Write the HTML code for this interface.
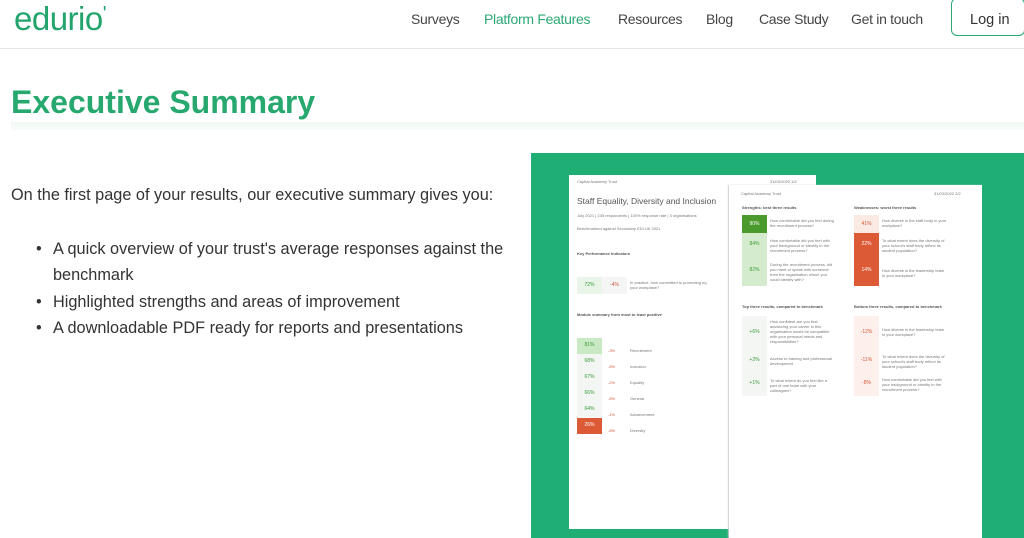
<!DOCTYPE html>
<html><head><meta charset="utf-8"><style>
*{margin:0;padding:0;box-sizing:border-box}
body{width:1024px;height:538px;overflow:hidden;background:#fff;font-family:"Liberation Sans",sans-serif;position:relative;color:#333}
.a{position:absolute}
.nav{font-size:14px;color:#444;top:11px;letter-spacing:-0.3px}
.t{position:absolute;font-size:4px;color:#777;white-space:nowrap;line-height:5px}
.box{position:absolute;font-size:5px;text-align:center;line-height:1}
</style></head><body>
<div class="a" style="left:14px;top:1px;font-size:33px;color:#23a46c;letter-spacing:-0.5px;line-height:36px">edurio<span style="font-size:20px;vertical-align:top;position:relative;top:-5px">'</span></div>
<div class="a nav" style="left:411px">Surveys</div>
<div class="a nav" style="left:484px;color:#2da873">Platform Features</div>
<div class="a nav" style="left:618px">Resources</div>
<div class="a nav" style="left:706px">Blog</div>
<div class="a nav" style="left:759px">Case Study</div>
<div class="a nav" style="left:851px">Get in touch</div>
<div class="a" style="left:951px;top:-2px;width:74px;height:38px;border:1px solid #2da873;border-radius:6px;font-size:14.5px;color:#333;padding:13px 0 0 18px">Log in</div>
<div class="a" style="left:0;top:48px;width:1024px;height:1px;background:#e5e5e5"></div>
<div class="a" style="left:11px;top:84px;font-size:32px;font-weight:bold;color:#27a86f">Executive Summary</div>
<div class="a" style="left:11px;top:122px;width:1013px;height:8px;background:linear-gradient(#eef7f1,#fafdfb)"></div>
<div class="a" style="left:11px;top:186px;font-size:16.3px;color:#333">On the first page of your results, our executive summary gives you:</div>
<div class="a" style="left:36px;top:236px;font-size:16.3px;line-height:26.4px;color:#333;width:490px">
<div style="display:flex"><span style="width:17px">•</span><span>A quick overview of your trust's average responses against the<br>benchmark</span></div>
<div style="display:flex"><span style="width:17px">•</span><span>Highlighted strengths and areas of improvement</span></div>
<div style="display:flex"><span style="width:17px">•</span><span>A downloadable PDF ready for reports and presentations</span></div>
</div>
<div class="a" style="left:531px;top:153px;width:493px;height:385px;background:#1fae74"></div>
<!-- page 1 -->
<div class="a" style="left:569px;top:175px;width:247px;height:354px;background:#fff"></div>
<div class="t" style="left:577px;top:179px">Capital Academy Trust</div>
<div class="t" style="left:770px;top:179px">31/03/2022 1/2</div>
<div class="t" style="left:577px;top:196px;font-size:8.5px;color:#555;line-height:10px">Staff Equality, Diversity and Inclusion</div>
<div class="t" style="left:577px;top:213px">July 2021 | 235 respondents | 100% response rate | 3 organisations</div>
<div class="t" style="left:577px;top:226px">Benchmarked against Secondary EDI UK 2021</div>
<div class="t" style="left:577px;top:251px;font-weight:bold;color:#555">Key Performance Indicators</div>
<div class="box" style="left:577px;top:277px;width:25px;height:17px;background:#eaf5ea;color:#3a9a3a;padding-top:6px">72%</div>
<div class="box" style="left:602px;top:277px;width:25px;height:17px;background:#f5f5f5;color:#d2573a;padding-top:6px">-4%</div>
<div class="t" style="left:630px;top:280px">In practice, how committed to promoting eq<br>your workplace?</div>
<div class="t" style="left:577px;top:312px;font-weight:bold;color:#555">Module summary from most to least positive</div>
<div class="box" style="left:577px;top:338px;width:25px;height:16px;background:#c9e9c4;color:#3a9a3a;padding-top:5px">81%</div>
<div class="box" style="left:577px;top:354px;width:25px;height:16px;background:#f3f6f3;color:#3a9a3a;padding-top:5px">68%</div>
<div class="box" style="left:577px;top:370px;width:25px;height:16px;background:#f3f6f3;color:#3a9a3a;padding-top:5px">67%</div>
<div class="box" style="left:577px;top:386px;width:25px;height:16px;background:#f3f6f3;color:#3a9a3a;padding-top:5px">66%</div>
<div class="box" style="left:577px;top:402px;width:25px;height:16px;background:#f3f6f3;color:#3a9a3a;padding-top:5px">64%</div>
<div class="box" style="left:577px;top:418px;width:25px;height:16px;background:#dd5a36;color:#fff;padding-top:5px">26%</div>
<div class="t" style="left:608px;top:343px;color:#d2573a;line-height:16px">-3%<br>-5%<br>-2%<br>-5%<br>-1%<br>-8%</div>
<div class="t" style="left:630px;top:343px;line-height:16px">Recruitment<br>Inclusion<br>Equality<br>General<br>Advancement<br>Diversity</div>
<!-- page 2 -->
<div class="a" style="left:729px;top:185px;width:253px;height:353px;background:#fff;box-shadow:-1px 0 1px #ccc"></div>
<div class="t" style="left:741px;top:191px">Capital Academy Trust</div>
<div class="t" style="left:934px;top:191px">31/03/2022 2/2</div>
<div class="t" style="left:742px;top:205px;font-weight:bold;color:#555">Strengths: best three results</div>
<div class="t" style="left:854px;top:205px;font-weight:bold;color:#555">Weaknesses: worst three results</div>
<div class="box" style="left:742px;top:215px;width:25px;height:18px;background:#4a9a2e;color:#fff;padding-top:7px">90%</div>
<div class="box" style="left:742px;top:233px;width:25px;height:23px;background:#d4eccd;color:#3a9a3a;padding-top:9px">84%</div>
<div class="box" style="left:742px;top:256px;width:25px;height:30px;background:#d4eccd;color:#3a9a3a;padding-top:12px">82%</div>
<div class="box" style="left:854px;top:215px;width:25px;height:18px;background:#fbe9e3;color:#d2573a;padding-top:7px">41%</div>
<div class="box" style="left:854px;top:233px;width:25px;height:23px;background:#dd5a36;color:#fff;padding-top:9px">22%</div>
<div class="box" style="left:854px;top:256px;width:25px;height:30px;background:#dd5a36;color:#fff;padding-top:12px">14%</div>
<div class="t" style="left:770px;top:218px">How comfortable did you feel during<br>the recruitment process?</div>
<div class="t" style="left:770px;top:238px">How comfortable did you feel with<br>your background or identity in the<br>recruitment process?</div>
<div class="t" style="left:770px;top:262px">During the recruitment process, did<br>you meet or speak with someone<br>from the organisation whom you<br>could identify with?</div>
<div class="t" style="left:882px;top:218px">How diverse is the staff body in your<br>workplace?</div>
<div class="t" style="left:882px;top:238px">To what extent does the diversity of<br>your school's staff body reflect its<br>student population?</div>
<div class="t" style="left:882px;top:268px">How diverse is the leadership team<br>in your workplace?</div>
<div class="t" style="left:742px;top:304px;font-weight:bold;color:#555">Top three results, compared to benchmark</div>
<div class="t" style="left:854px;top:304px;font-weight:bold;color:#555">Bottom three results, compared to benchmark</div>
<div class="box" style="left:742px;top:316px;width:25px;height:34px;background:#f3f6f3;color:#3a9a3a;padding-top:14px">+6%</div>
<div class="box" style="left:742px;top:350px;width:25px;height:22px;background:#f3f6f3;color:#3a9a3a;padding-top:8px">+2%</div>
<div class="box" style="left:742px;top:372px;width:25px;height:24px;background:#f3f6f3;color:#3a9a3a;padding-top:9px">+1%</div>
<div class="box" style="left:854px;top:316px;width:25px;height:34px;background:#fdf0ec;color:#d2573a;padding-top:14px">-12%</div>
<div class="box" style="left:854px;top:350px;width:25px;height:22px;background:#fdf0ec;color:#d2573a;padding-top:8px">-11%</div>
<div class="box" style="left:854px;top:372px;width:25px;height:24px;background:#fdf0ec;color:#d2573a;padding-top:9px">-8%</div>
<div class="t" style="left:770px;top:319px">How confident are you that<br>advancing your career in this<br>organisation would be compatible<br>with your personal needs and<br>responsibilities?</div>
<div class="t" style="left:770px;top:356px">Access to training and professional<br>development</div>
<div class="t" style="left:770px;top:378px">To what extent do you feel like a<br>part of one team with your<br>colleagues?</div>
<div class="t" style="left:882px;top:327px">How diverse is the leadership team<br>in your workplace?</div>
<div class="t" style="left:882px;top:354px">To what extent does the diversity of<br>your school's staff body reflect its<br>student population?</div>
<div class="t" style="left:882px;top:377px">How comfortable did you feel with<br>your background or identity in the<br>recruitment process?</div>
</body></html>
